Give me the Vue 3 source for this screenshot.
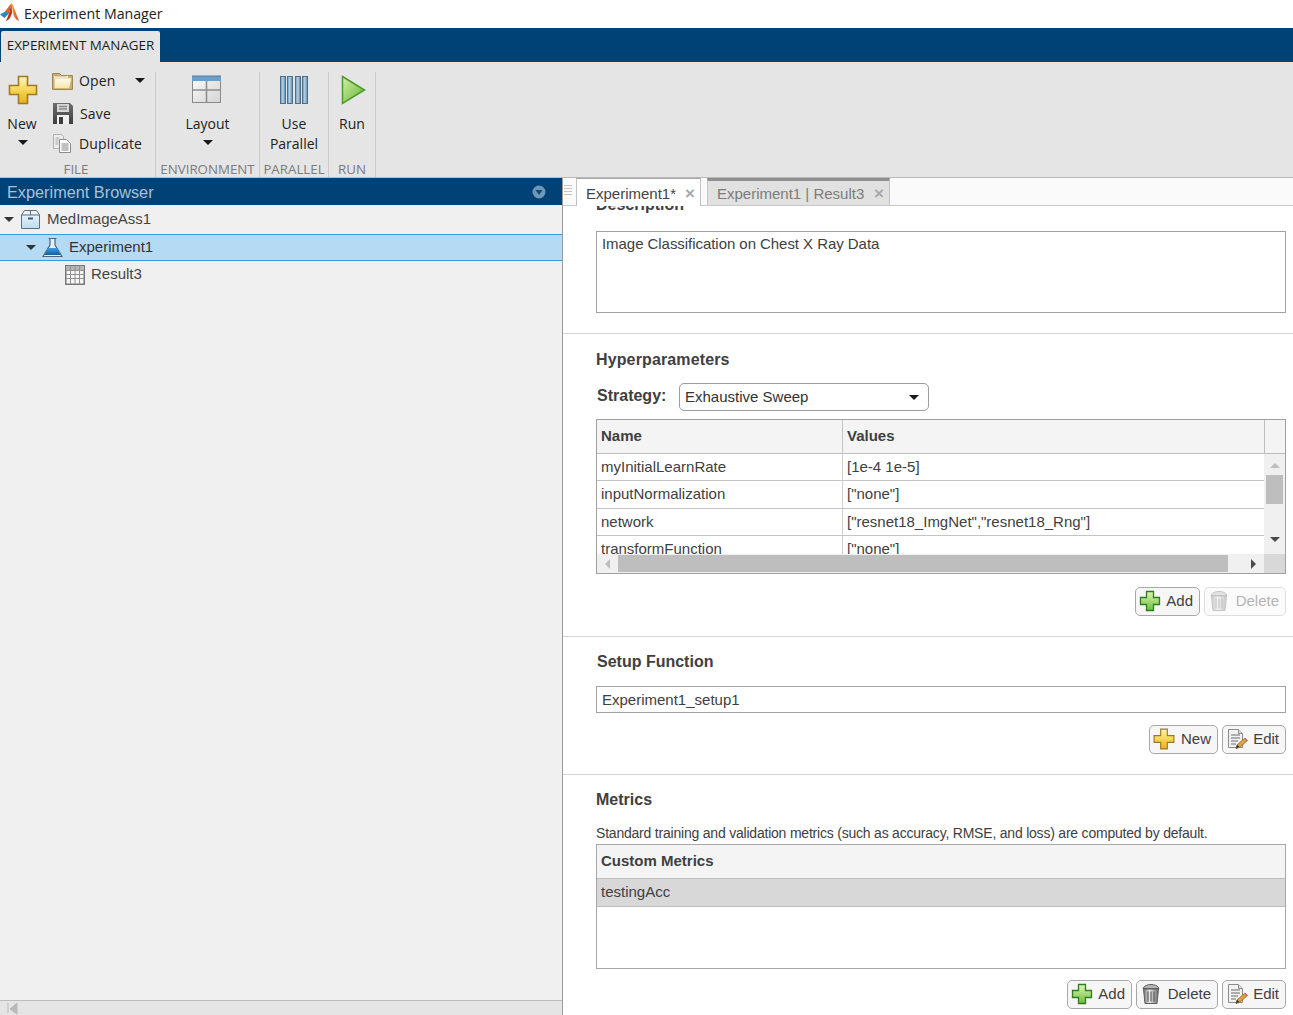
<script setup>
const params = [
  ['myInitialLearnRate', '[1e-4 1e-5]'],
  ['inputNormalization', '["none"]'],
  ['network', '["resnet18_ImgNet","resnet18_Rng"]'],
  ['transformFunction', '["none"]'],
]
</script>

<template>
  <div class="app">
    <svg class="sprite" aria-hidden="true">
      <defs>
        <linearGradient id="gy" x1="0" y1="0" x2="0" y2="1"><stop offset="0" stop-color="#fff6b8"/><stop offset="0.55" stop-color="#f6d24e"/><stop offset="1" stop-color="#e8ae22"/></linearGradient>
        <linearGradient id="gg" x1="0" y1="0" x2="0" y2="1"><stop offset="0" stop-color="#dff5b4"/><stop offset="1" stop-color="#6cc03a"/></linearGradient>
        <linearGradient id="gp" x1="0" y1="0" x2="1" y2="1"><stop offset="0" stop-color="#d6f0a8"/><stop offset="1" stop-color="#5fb52e"/></linearGradient>
        <linearGradient id="gb" x1="0" y1="0" x2="1" y2="0"><stop offset="0" stop-color="#5f93ba"/><stop offset="0.45" stop-color="#b5d3e8"/><stop offset="1" stop-color="#4f86ad"/></linearGradient>
        <linearGradient id="gt" x1="0" y1="0" x2="1" y2="0"><stop offset="0" stop-color="#6f6f6f"/><stop offset="0.4" stop-color="#e8e8e8"/><stop offset="1" stop-color="#6a6a6a"/></linearGradient>
        <linearGradient id="gf" x1="0" y1="0" x2="0" y2="1"><stop offset="0" stop-color="#fffdf0"/><stop offset="1" stop-color="#f6e6a6"/></linearGradient>
        <linearGradient id="gs" x1="0" y1="0" x2="0" y2="1"><stop offset="0" stop-color="#6e6e6e"/><stop offset="1" stop-color="#3e3e3e"/></linearGradient>
        <linearGradient id="gc" x1="0" y1="0" x2="1" y2="1"><stop offset="0" stop-color="#fbfbfb"/><stop offset="1" stop-color="#d4d4d4"/></linearGradient>
        <linearGradient id="gk" x1="0" y1="0" x2="0" y2="1"><stop offset="0" stop-color="#f2f9fd"/><stop offset="1" stop-color="#bcdcef"/></linearGradient>
        <linearGradient id="gl" x1="0" y1="0" x2="0" y2="1"><stop offset="0" stop-color="#3f9be0"/><stop offset="1" stop-color="#0f5fa8"/></linearGradient>
        <linearGradient id="gm" x1="0" y1="0" x2="1" y2="0"><stop offset="0" stop-color="#f4b04a"/><stop offset="1" stop-color="#c93a14"/></linearGradient>
      </defs>
      <symbol id="plus-y" viewBox="0 0 30 30"><path d="M10.500 1.500h9v9h9v9h-9v9h-9v-9h-9v-9h9z" fill="url(#gy)" stroke="#a07a1c" stroke-width="1.600"/></symbol>
      <symbol id="plus-g" viewBox="0 0 22 22"><path d="M7.500 1.500h7v6h6v7h-6v6h-7v-6h-6v-7h6z" fill="url(#gg)" stroke="#2f7d1f" stroke-width="1.300"/></symbol>
      <symbol id="trash" viewBox="0 0 22 22"><path d="M3 5.500C4 2.500 8 1.500 11 1.500s7 1 8 4z" fill="#b5b5b5" stroke="#5e5e5e"/><path d="M3.500 6h15l-1.500 14.500H5z" fill="url(#gt)" stroke="#5e5e5e"/><path d="M8 8.500v10M11 8.500v10M14 8.500v10" stroke="#4e4e4e"/></symbol>
      <symbol id="edit" viewBox="0 0 22 22"><path d="M2.500 1.500h10l4 4v14h-14z" fill="#f2f2f2" stroke="#8b8b8b"/><path d="M12.500 1.500v4h4" fill="#ddd" stroke="#8b8b8b"/><path d="M5 7h9M5 10h9M5 13h7M5 16h5" stroke="#6a6a6a"/><path d="M10 20.500l1-3.500 8-7 2.500 2.500-8 7z" fill="#e8a23a" stroke="#8a5b22" stroke-width=".8"/><path d="M10 20.500l1-3.500 2.500 1.500z" fill="#333"/><path d="M18 11l2.500 2.500 1-1L19 10z" fill="#dc6a8c"/></symbol>
    </svg>

    <header class="title">
      <svg class="logo" width="20" height="20" viewBox="0 0 20 20"><path d="M0 11.500L6 8l3 2.500L4.500 15z" fill="#2f86c4"/><path d="M5 8.500L11.500 0 9 10.500z" fill="#e0621f"/><path d="M11.500 0L9 10.500 6 18c3-1 5-4 6-8z" fill="#b9361a"/><path d="M11.500 0c2.500 3 4.500 11 7.500 18-2.500-1-4.500-3-6-7z" fill="url(#gm)"/></svg>
      <span>Experiment Manager</span>
    </header>

    <div class="tabstrip"><div class="apptab">EXPERIMENT MANAGER</div></div>

    <section class="ribbon">
      <div class="rsec file">
        <div class="rbody">
          <div class="big newbtn">
            <svg class="bicon shift" width="30" height="30"><use href="#plus-y"/></svg>
            <div class="blabel">New</div>
            <i class="caret shift"></i>
          </div>
          <div class="stack">
            <div class="sitem open">
              <svg width="21" height="18" viewBox="0 0 21 18"><path d="M.5 1.500h7l2 2h11v14H.5z" fill="#c9ae6e" stroke="#a08650"/><path d="M2 4.500h12l2-1v12H2z" fill="url(#gf)"/><path d="M3 6h16.500l-2 10.500H2z" fill="url(#gf)" stroke="#c4ab72" stroke-width=".6"/></svg>
              <span>Open</span><i class="caret"></i>
            </div>
            <div class="sitem save">
              <svg width="20" height="21" viewBox="0 0 20 21"><path d="M0 0h17l3 3v18H0z" fill="url(#gs)"/><path d="M4 1h12v8H4z" fill="#d8d8d8"/><path d="M6 3.500h8M6 6h8" stroke="#8a8a8a" stroke-width="1.300"/><path d="M4 12h12v9H4z" fill="#f0f0f0"/><path d="M6 14h4v7H6z" fill="#3c3c3c"/></svg>
              <span>Save</span>
            </div>
            <div class="sitem dup">
              <svg width="19" height="19" viewBox="0 0 19 19"><path d="M.5.500h8l2 2v12H.5z" fill="#ececec" stroke="#b0b0b0"/><path d="M6.500 5.500h7l4 4v9h-11z" fill="#fafafa" stroke="#8c8c8c"/><path d="M8.500 10h7M8.500 12h7M8.500 14h7M8.500 16h7" stroke="#888"/><path d="M2.500 4h4M2.500 6h3M2.500 8h3M2.500 10h3" stroke="#aaa"/></svg>
              <span>Duplicate</span>
            </div>
          </div>
        </div>
        <div class="rlabel filelabel">FILE</div>
      </div>

      <div class="rsec env">
        <div class="rbody center">
          <div class="big">
            <svg class="bicon" width="30" height="30" viewBox="0 0 30 30"><rect x=".5" y="1.500" width="28" height="26" fill="url(#gc)" stroke="#8a8a8a"/><rect x="0" y="1" width="29" height="5" fill="#6b9fc8"/><path d="M0 1h29" stroke="#4f7da3"/><path d="M1 15h27M14.500 6v21" stroke="#8f8f8f" stroke-width="1.600"/></svg>
            <div class="blabel">Layout</div>
            <i class="caret shift"></i>
          </div>
        </div>
        <div class="rlabel">ENVIRONMENT</div>
      </div>

      <div class="rsec par">
        <div class="rbody center">
          <div class="big">
            <svg class="bicon" width="30" height="30" viewBox="0 0 30 30"><g fill="url(#gb)" stroke="#4f6f88"><rect x="1.500" y="1.500" width="5" height="27"/><rect x="8.500" y="1.500" width="5" height="27"/><rect x="16.500" y="1.500" width="5" height="27"/><rect x="23.500" y="1.500" width="5" height="27"/></g></svg>
            <div class="blabel">Use<br>Parallel</div>
          </div>
        </div>
        <div class="rlabel">PARALLEL</div>
      </div>

      <div class="rsec run">
        <div class="rbody center">
          <div class="big">
            <svg class="bicon play" width="25" height="30" viewBox="0 0 25 30"><path d="M1.500 1.500L23.500 15 1.500 28.500z" fill="url(#gp)" stroke="#4c9a2a" stroke-width="1.500"/></svg>
            <div class="blabel">Run</div>
          </div>
        </div>
        <div class="rlabel">RUN</div>
      </div>
    </section>

    <main class="work">
      <aside class="browser">
        <div class="bhead">
          <span>Experiment Browser</span>
          <svg width="14" height="14" viewBox="0 0 14 14"><circle cx="7" cy="7" r="6.500" fill="#6f97b7"/><path d="M3.500 5h7L7 10z" fill="#0f4a7c"/></svg>
        </div>
        <div class="tree">
          <div class="node lvl0">
            <i class="tcaret"></i>
            <svg width="21" height="21" viewBox="0 0 21 21"><path d="M1.500 6L4.500 1.500h12L19.500 6v13.500h-18z" fill="url(#gk)" stroke="#5b7182"/><path d="M1.500 6h18M10.500 1.500V6" stroke="#5b7182"/><path d="M8 9.500h5" stroke="#44586a" stroke-width="2"/></svg>
            <span>MedImageAss1</span>
          </div>
          <div class="node lvl1 sel">
            <i class="tcaret"></i>
            <svg width="21" height="21" viewBox="0 0 21 21"><path d="M6.500 1.500h8M8 1.500V8L1 19.500h19L13 8V1.500z" fill="#e4eff7" stroke="#4f6578" stroke-width="1.200"/><path d="M6 11h9l3.500 7h-16z" fill="url(#gl)"/></svg>
            <span>Experiment1</span>
          </div>
          <div class="node lvl2">
            <svg width="20" height="20" viewBox="0 0 20 20"><rect x=".75" y=".75" width="18.500" height="18.500" fill="#f6f6f6" stroke="#777" stroke-width="1.500"/><path d="M1 1h18v4H1z" fill="#b4b4b4"/><path d="M1 5.500h18M1 9.500h18M1 13.500h18M5.500 1v18M10 1v18M14.500 1v18" stroke="#929292"/></svg>
            <span>Result3</span>
          </div>
        </div>
        <div class="bfoot">
          <svg width="14" height="14" viewBox="0 0 14 14"><path d="M3 2v10M12 2L5 8l7 5z" fill="#b9b9b9" stroke="#b9b9b9"/></svg>
        </div>
      </aside>

      <div class="editor">
        <nav class="etabs">
          <div class="grip"></div>
          <div class="etab active"><span>Experiment1*</span><b>×</b></div>
          <div class="etab off"><span>Experiment1 | Result3</span><b>×</b></div>
        </nav>
        <div class="scroll">
          <div class="content">
            <section class="sec desc">
              <h3>Description</h3>
              <div class="textbox">Image Classification on Chest X Ray Data</div>
            </section>

            <section class="sec hyper">
              <h3>Hyperparameters</h3>
              <div class="strategy">
                <label>Strategy:</label>
                <div class="select"><span>Exhaustive Sweep</span><i class="caret dark"></i></div>
              </div>
              <div class="tbl">
                <div class="thead">
                  <div class="c1">Name</div><div class="c2">Values</div><div class="c3"></div>
                </div>
                <div class="tbody">
                  <div class="rows">
                    <div v-for="p in params" :key="p[0]" class="row">
                      <div class="c1">{{ p[0] }}</div><div class="c2">{{ p[1] }}</div>
                    </div>
                  </div>
                  <div class="vbar">
                    <i class="arrow up"></i>
                    <div class="vthumb"></div>
                    <i class="arrow down"></i>
                  </div>
                </div>
                <div class="hbar">
                  <div class="htrack">
                    <i class="arrow left"></i>
                    <div class="hthumb"></div>
                    <i class="arrow right"></i>
                  </div>
                  <div class="corner"></div>
                </div>
              </div>
              <div class="btns">
                <div class="btn add"><svg width="22" height="22"><use href="#plus-g"/></svg><span>Add</span></div>
                <div class="btn del off"><svg width="22" height="22"><use href="#trash"/></svg><span>Delete</span></div>
              </div>
            </section>

            <section class="sec setup">
              <h3 class="in1">Setup Function</h3>
              <div class="input">Experiment1_setup1</div>
              <div class="btns">
                <div class="btn new"><svg width="22" height="22"><use href="#plus-y"/></svg><span>New</span></div>
                <div class="btn edit"><svg width="22" height="22"><use href="#edit"/></svg><span>Edit</span></div>
              </div>
            </section>

            <section class="sec metrics">
              <h3>Metrics</h3>
              <p>Standard training and validation metrics (such as accuracy, RMSE, and loss) are computed by default.</p>
              <div class="mtbl">
                <div class="mhead">Custom Metrics</div>
                <div class="mrow">testingAcc</div>
              </div>
              <div class="btns">
                <div class="btn add"><svg width="22" height="22"><use href="#plus-g"/></svg><span>Add</span></div>
                <div class="btn del"><svg width="22" height="22"><use href="#trash"/></svg><span>Delete</span></div>
                <div class="btn edit"><svg width="22" height="22"><use href="#edit"/></svg><span>Edit</span></div>
              </div>
            </section>
          </div>
        </div>
      </div>
    </main>
  </div>
</template>

<style>
html, body { overflow: hidden; }
</style>

<style scoped>
.app { width: 1293px; height: 1015px; display: flex; flex-direction: column; overflow: hidden; background: #fff; font-family: "Liberation Sans", Arial, sans-serif; color: #333; }
.sprite { position: absolute; width: 0; height: 0; }
.title { height: 28px; flex: none; display: flex; align-items: center; font-family: "Open Sans", sans-serif; font-size: 14.200px; color: #222; padding-bottom: 2px; box-sizing: border-box; }
.logo { margin: 0 4px 0 0; }
.tabstrip { height: 34px; flex: none; background: #004176; padding: 3px 0 0 1px; box-sizing: border-box; }
.apptab { width: 159px; height: 31px; background: #e5e5e5; border-radius: 2px 2px 0 0; font-family: "Open Sans", sans-serif; font-size: 13.400px; line-height: 28px; text-align: center; color: #1d1d1d; white-space: nowrap; }
.ribbon { height: 116px; flex: none; background: #e5e5e5; padding-top: 10px; box-sizing: border-box; display: flex; font-family: "Open Sans", sans-serif; font-size: 14px; color: #222; border-bottom: 1px solid #b9b9b9; }
.rsec { display: flex; flex-direction: column; border-right: 1px solid #c9c9c9; box-sizing: border-box; }
.file { width: 156px; }
.env { width: 104px; }
.par { width: 69px; }
.run { width: 47px; }
.rbody { height: 89px; display: flex; }
.center { justify-content: center; }
.rlabel { height: 16px; font-size: 13.300px; line-height: 17px; text-align: center; color: #7b7b7b; white-space: nowrap; }
.filelabel { padding-right: 3px; }
.big { display: flex; flex-direction: column; align-items: center; padding-top: 3px; text-align: center; line-height: 20px; }
.bicon { flex: none; height: 30px; }
.shift { margin-left: 2px; }
.play { margin-left: 2px; }
.blabel { margin-top: 9px; }
.newbtn { width: 44px; }
.caret { display: block; width: 0; height: 0; border-left: 5px solid transparent; border-right: 5px solid transparent; border-top: 5px solid #1a1a1a; margin-top: 6px; }
.stack { display: flex; flex-direction: column; padding-left: 8px; letter-spacing: .15px; }
.sitem { height: 31px; flex: none; display: flex; align-items: center; gap: 6px; }
.sitem.open { height: 17px; gap: 6px; }
.sitem.open .caret { margin: 0 0 0 13px; }
.save { margin-top: 9px; gap: 7px; }
.save svg, .dup svg { margin-left: 1px; }
.sitem.dup { gap: 7px; height: 29px; }
.work { flex: 1; display: flex; min-height: 0; }
.browser { width: 563px; flex: none; display: flex; flex-direction: column; background: #f0f0f0; border-right: 1px solid #9a9a9a; box-sizing: border-box; }
.bhead { height: 27px; flex: none; background: #004176; color: #a9c2d8; font-size: 16.300px; display: flex; align-items: center; justify-content: space-between; padding: 1px 16px 0 7px; box-sizing: border-box; }
.tree { flex: 1; font-size: 15px; color: #444; }
.node { height: 27px; display: flex; align-items: center; white-space: nowrap; box-sizing: border-box; }
.node span { margin-bottom: 2px; }
.lvl0 { height: 29px; padding-left: 4px; gap: 6px; }
.lvl1 { padding-left: 26px; gap: 6px; background: #b5daf4; border-top: 1px solid #2f9be0; border-bottom: 1px solid #2f9be0; height: 27px; color: #333; }
.lvl1 span { margin-bottom: 3px; }
.lvl2 { padding-left: 65px; gap: 6px; }
.tcaret { display: block; width: 0; height: 0; border-left: 5px solid transparent; border-right: 5px solid transparent; border-top: 5px solid #333; }
.bfoot { height: 14px; flex: none; background: #e5e5e5; border-top: 1px solid #bcbcbc; padding-left: 5px; overflow: hidden; }
.editor { flex: 1; min-width: 0; display: flex; flex-direction: column; background: #fff; }
.etabs { height: 28px; flex: none; display: flex; box-sizing: border-box; background: #fafafa; border-bottom: 1px solid #c8c8c8; font-size: 15px; }
.grip { width: 8px; margin: 7px 4px 8px 1px; background: repeating-linear-gradient(#c4c4c4 0 1px, transparent 1px 3px); }
.etab { display: flex; align-items: center; justify-content: space-between; box-sizing: border-box; white-space: nowrap; }
.etab b { font-size: 17px; font-weight: 700; color: #a8a8a8; line-height: 1; }
.active { width: 125px; padding: 2px 5px 0 9px; background: #fff; border-top: 1px solid #a5a5a5; border-right: 1px solid #c2c2c2; border-left: 1px solid #c2c2c2; margin-bottom: -1px; height: 28px; color: #444; }
.off { width: 183px; margin-left: 6px; padding: 1px 5px 0 9px; background: #e1e1e1; border-top: 3px solid #8f8f8f; border-right: 1px solid #c2c2c2; border-left: 1px solid #c2c2c2; height: 27px; color: #7c7c7c; }
.scroll { flex: 1; min-height: 0; overflow: hidden; }
.content { margin-top: -13px; }
.sec { padding: 0 7px 0 33px; border-bottom: 1px solid #d4d4d4; box-sizing: border-box; }
.sec:last-child { border-bottom: 0; }
h3 { margin: 0; font-size: 16px; line-height: 18px; font-weight: 700; color: #404040; }
.in1 { margin-left: 1px; }
.desc { height: 141px; padding-top: 3px; }
.textbox { margin-top: 17px; height: 82px; box-sizing: border-box; border: 1px solid #a3a3a3; padding: 3px 5px; font-size: 15px; line-height: 18px; color: #404040; letter-spacing: -.05px; }
.hyper { height: 303px; padding-top: 17px; }
.hyper h3 { letter-spacing: .13px; }
.strategy { display: flex; align-items: center; margin-top: 14px; height: 28px; }
.strategy label { width: 83px; padding: 0 0 3px 1px; box-sizing: border-box; font-size: 16px; font-weight: 700; color: #404040; }
.select { width: 250px; height: 28px; box-sizing: border-box; border: 1px solid #9d9d9d; border-radius: 5px; display: flex; align-items: center; justify-content: space-between; padding: 0 9px 0 5px; font-size: 15px; color: #333; }
.select span { margin-bottom: 2px; }
.caret.dark { margin: 0; }
.tbl { margin-top: 8px; height: 155px; border: 1px solid #a0a0a0; box-sizing: border-box; font-size: 15px; color: #404040; }
.thead { display: flex; height: 34px; box-sizing: border-box; background: #f4f4f4; border-bottom: 1px solid #bdbdbd; font-weight: 700; line-height: 32px; }
.c1 { width: 246px; flex: none; box-sizing: border-box; padding-left: 4px; border-right: 1px solid #c4c4c4; }
.c2 { flex: 1; padding-left: 4px; white-space: nowrap; }
.c3 { width: 20px; flex: none; border-left: 1px solid #bdbdbd; }
.tbody { display: flex; height: 100px; overflow: hidden; }
.rows { flex: 1; min-width: 0; }
.row { display: flex; height: 27.300px; box-sizing: border-box; border-bottom: 1px solid #c4c4c4; line-height: 26px; }
.row .c1 { border-right: 1px solid #cfcfcf; }
.vbar { width: 21px; flex: none; background: #f0f0f0; display: flex; flex-direction: column; align-items: center; }
.vthumb { width: 17px; height: 29px; background: #bebebe; margin-top: 7px; flex: none; }
.arrow { display: block; width: 0; height: 0; flex: none; }
.up { margin-top: 9px; border-left: 5px solid transparent; border-right: 5px solid transparent; border-bottom: 5px solid #bdbdbd; }
.down { margin-top: 33px; border-left: 5px solid transparent; border-right: 5px solid transparent; border-top: 5px solid #4a4a4a; }
.hbar { display: flex; height: 19px; }
.htrack { flex: 1; background: #f0f0f0; display: flex; align-items: center; padding-left: 8px; }
.left { border-top: 5px solid transparent; border-bottom: 5px solid transparent; border-right: 5px solid #bdbdbd; }
.hthumb { width: 610px; height: 17px; background: #bebebe; margin-left: 8px; }
.right { margin-left: 23px; border-top: 5px solid transparent; border-bottom: 5px solid transparent; border-left: 5px solid #4a4a4a; }
.corner { width: 21px; background: #d8d8d8; }
.btns { display: flex; justify-content: flex-end; gap: 4px; margin-top: 13px; }
.btn { height: 29px; box-sizing: border-box; border: 1px solid #a8a8a8; border-radius: 5px; background: #f6f6f6; display: flex; align-items: center; justify-content: space-between; padding: 0 6px 2px 3px; font-size: 15px; color: #404040; }
.add { width: 65px; }
.del { width: 82px; }
.new { width: 69px; }
.edit { width: 64px; }
.btn.off { width: 82px; margin: 0; background: #fbfbfb; border: 1px solid #dedede; color: #b4b4b4; }
.btn.off svg { opacity: .35; }
.setup { height: 138px; padding-top: 16px; }
.input { margin-top: 15px; height: 27px; box-sizing: border-box; border: 1px solid #a3a3a3; padding: 0 5px; line-height: 25px; font-size: 15px; color: #404040; }
.setup .btns { margin-top: 12px; }
.metrics { padding-top: 16px; }
.metrics p { margin: 16px 0 0; font-size: 14px; line-height: 16px; color: #404040; letter-spacing: -.21px; white-space: nowrap; }
.mtbl { margin-top: 3px; height: 125px; box-sizing: border-box; border: 1px solid #a8a8a8; font-size: 15px; color: #404040; }
.mhead { height: 34px; box-sizing: border-box; background: #f4f4f4; border-bottom: 1px solid #bdbdbd; padding-left: 4px; font-weight: 700; line-height: 32px; }
.mrow { height: 28px; box-sizing: border-box; background: #d8d8d8; border-bottom: 1px solid #bdbdbd; padding-left: 4px; line-height: 26px; }
.metrics .btns { margin-top: 11px; }
</style>
